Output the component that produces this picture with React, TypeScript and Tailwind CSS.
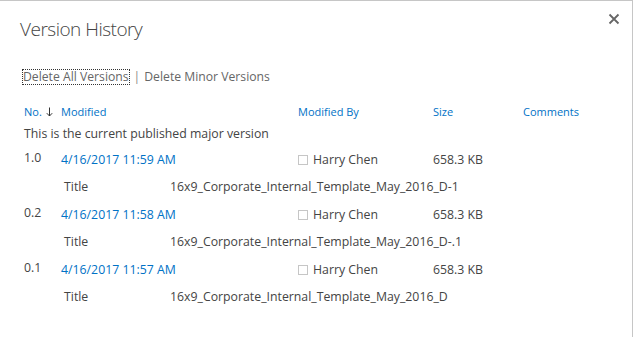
const versions = [
  { no: "1.0", date: "4/16/2017 11:59 AM", title: "16x9_Corporate_Internal_Template_May_2016_D-1" },
  { no: "0.2", date: "4/16/2017 11:58 AM", title: "16x9_Corporate_Internal_Template_May_2016_D-.1" },
  { no: "0.1", date: "4/16/2017 11:57 AM", title: "16x9_Corporate_Internal_Template_May_2016_D" },
];

export default function App() {
  return (
    <div className="relative h-[337px] w-[634px] overflow-hidden bg-white font-['Open_Sans',sans-serif] text-[#444]">
      <div className="h-[337px] w-[633px] border-t border-r border-[#c6c6c6]">
        <button className="absolute right-[14px] top-[13px]">
          <svg width="12" height="12" viewBox="0 0 12 12">
            <path d="M1.5 1.5 L10.5 10.5 M10.5 1.5 L1.5 10.5" stroke="#666" strokeWidth="1.8" />
          </svg>
        </button>
        <h1 className="pl-[20px] pt-[14px] text-[19px] font-light leading-[28px] tracking-[-0.5px] text-[#444]">Version History</h1>

        <div className="mt-[26px] flex items-center pl-[22px] text-[12.2px] leading-[16px] text-[#666]">
          <span className="outline outline-1 outline-dotted outline-[#333] -outline-offset-1 px-[1px]">Delete All Versions</span>
          <span className="px-[4px] text-[#888]">|</span>
          <span>Delete Minor Versions</span>
        </div>

        <div className="mt-[19px] flex pl-[24px] text-[11px] leading-[16px] text-[#0072c6]">
          <div className="flex w-[37px] items-center gap-[4px]">
            <span>No.</span>
            <svg width="7" height="10" viewBox="0 0 7 10">
              <path d="M3.5 0.5 V9 M0.8 6.2 L3.5 9 L6.2 6.2" stroke="#333" strokeWidth="1" fill="none" />
            </svg>
          </div>
          <div className="w-[237px]">Modified</div>
          <div className="w-[135px]">Modified By</div>
          <div className="w-[90px]">Size</div>
          <div>Comments</div>
        </div>

        <div className="mt-[5px] pl-[24px] text-[12.3px] leading-[18px]">This is the current published major version</div>

        <div className="mt-[3px] pl-[24px] text-[12.3px]">
          {versions.map((v) => (
            <div key={v.no}>
              <div className="flex h-[28px] items-center">
                <div className="-mt-[3px] w-[37px]">{v.no}</div>
                <div className="w-[237px] text-[#0072c6]">{v.date}</div>
                <div className="flex w-[135px] items-center gap-[5px]">
                  <span className="h-[10px] w-[10px] border border-[#c6c6c6]" />
                  <span>Harry Chen</span>
                </div>
                <div className="w-[90px]">658.3 KB</div>
              </div>
              <div className="flex h-[27px] items-center pl-[40px]">
                <div className="w-[106px]">Title</div>
                <div>{v.title}</div>
              </div>
            </div>
          ))}
        </div>
      </div>
    </div>
  );
}
